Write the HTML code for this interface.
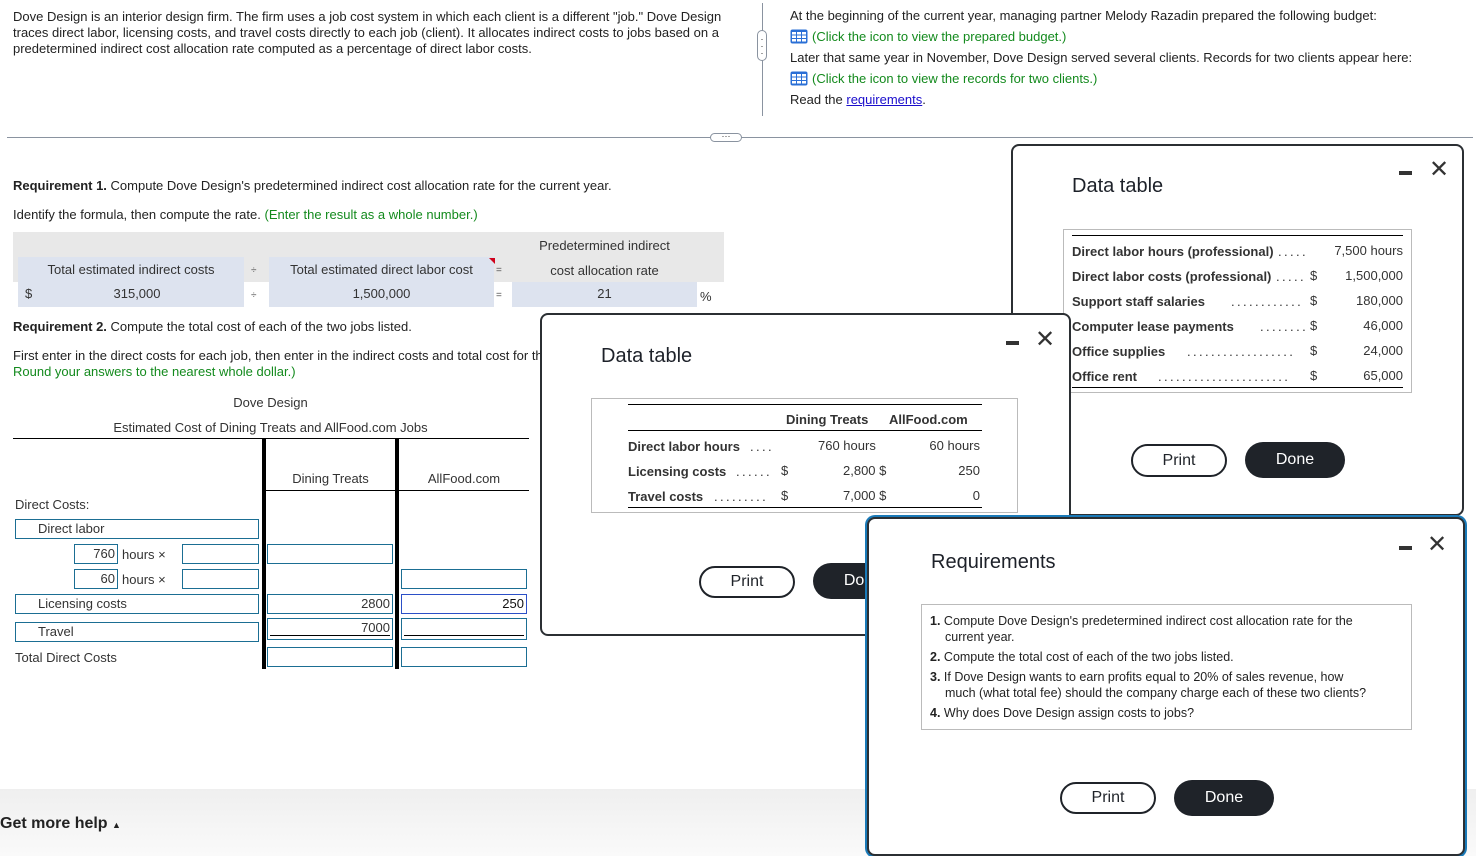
<!DOCTYPE html>
<html><head><meta charset="utf-8"><style>
*{margin:0;padding:0;box-sizing:border-box}
body{width:1476px;height:856px;position:relative;overflow:hidden;background:#fff;font-family:"Liberation Sans",Arial,sans-serif;font-size:13px;color:#222}
.a{position:absolute;white-space:nowrap;line-height:16px}
.g{color:#138a1d}
.box{position:absolute;border:1px solid #1b6e93;background:#fff;text-align:right;padding-right:2px;line-height:17px;font-size:13px}
.bl{position:absolute;background:#dde3ef}
.dlg{position:absolute;background:#fff;border:2px solid #2b2f33;border-radius:8px}
.ttl{position:absolute;font-size:20px;color:#1d2129;line-height:24px}
.min{position:absolute;width:13px;height:4px;background:#333}
.x{position:absolute;font-size:24px;line-height:24px;color:#333;font-weight:300}
.pr{position:absolute;border:2px solid #1f2329;border-radius:17px;text-align:center;font-size:16px;color:#1f2329;background:#fff}
.dn{position:absolute;border-radius:18px;text-align:center;font-size:16px;color:#fff;background:#1f2329}
.tb{position:absolute;border:1px solid #bbb;background:#fff}
.b{font-weight:bold;color:#333}
.d{letter-spacing:2.4px;font-weight:normal;color:#333}
.ic{display:inline-block;width:18px;height:15px;vertical-align:-3px;margin-right:4px}
</style></head><body>

<div class="a" style="left:13px;top:9px;width:720px;white-space:normal">Dove Design is an interior design firm. The firm uses a job cost system in which each client is a different "job." Dove Design traces direct labor, licensing costs, and travel costs directly to each job (client). It allocates indirect costs to jobs based on a predetermined indirect cost allocation rate computed as a percentage of direct labor costs.</div>

<div style="position:absolute;left:762px;top:3px;width:1px;height:113px;background:#8a93a0"></div>
<div style="position:absolute;left:757px;top:30px;width:10px;height:31px;border:1px solid #8a93a0;border-radius:5px;background:#fff;font-size:9px;line-height:7px;text-align:center;padding-top:5px">·<br>·<br>·</div>

<div class="a" style="left:790px;top:8px">At the beginning of the current year, managing partner Melody Razadin prepared the following budget:</div>
<div class="a g" style="left:790px;top:29px"><svg class="ic" viewBox="0 0 18 15"><rect x="0.5" y="0.5" width="17" height="14" rx="2" fill="#2a6fd6"/><g fill="#fff"><rect x="2" y="3" width="4" height="2.5"/><rect x="7" y="3" width="4" height="2.5"/><rect x="12" y="3" width="4" height="2.5"/><rect x="2" y="6.5" width="4" height="2.5"/><rect x="7" y="6.5" width="4" height="2.5"/><rect x="12" y="6.5" width="4" height="2.5"/><rect x="2" y="10" width="4" height="2.5"/><rect x="7" y="10" width="4" height="2.5"/><rect x="12" y="10" width="4" height="2.5"/></g></svg>(Click the icon to view the prepared budget.)</div>
<div class="a" style="left:790px;top:50px">Later that same year in November, Dove Design served several clients. Records for two clients appear here:</div>
<div class="a g" style="left:790px;top:71px"><svg class="ic" viewBox="0 0 18 15"><rect x="0.5" y="0.5" width="17" height="14" rx="2" fill="#2a6fd6"/><g fill="#fff"><rect x="2" y="3" width="4" height="2.5"/><rect x="7" y="3" width="4" height="2.5"/><rect x="12" y="3" width="4" height="2.5"/><rect x="2" y="6.5" width="4" height="2.5"/><rect x="7" y="6.5" width="4" height="2.5"/><rect x="12" y="6.5" width="4" height="2.5"/><rect x="2" y="10" width="4" height="2.5"/><rect x="7" y="10" width="4" height="2.5"/><rect x="12" y="10" width="4" height="2.5"/></g></svg>(Click the icon to view the records for two clients.)</div>
<div class="a" style="left:790px;top:92px">Read the <span style="color:#1a0dcc;text-decoration:underline">requirements</span>.</div>

<div style="position:absolute;left:7px;top:137px;width:1466px;height:1px;background:#8a93a0"></div>
<div style="position:absolute;left:710px;top:133px;width:32px;height:9px;border:1px solid #8a93a0;border-radius:5px;background:#fff;font-size:9px;line-height:4px;text-align:center;color:#333">···</div>

<div class="a" style="left:13px;top:178px"><b>Requirement 1.</b> Compute Dove Design's predetermined indirect cost allocation rate for the current year.</div>
<div class="a" style="left:13px;top:207px">Identify the formula, then compute the rate. <span class="g">(Enter the result as a whole number.)</span></div>

<div style="position:absolute;left:13px;top:232px;width:711px;height:50px;background:#e8e8e8"></div>
<div class="bl" style="left:18px;top:257px;width:226px;height:50px"></div>
<div class="bl" style="left:269px;top:257px;width:225px;height:50px"></div>
<div class="bl" style="left:512px;top:282px;width:185px;height:25px"></div>
<div style="position:absolute;left:489px;top:258px;width:0;height:0;border-left:6px solid transparent;border-top:6px solid #d0021b"></div>
<div class="a" style="left:18px;top:262px;width:226px;text-align:center;color:#333">Total estimated indirect costs</div>
<div class="a" style="left:269px;top:262px;width:225px;text-align:center;color:#333">Total estimated direct labor cost</div>
<div class="a" style="left:512px;top:238px;width:185px;text-align:center;color:#333">Predetermined indirect</div>
<div class="a" style="left:512px;top:263px;width:185px;text-align:center;color:#333">cost allocation rate</div>
<div class="a" style="left:251px;top:263px;font-size:10px;color:#555">÷</div>
<div class="a" style="left:251px;top:288px;font-size:10px;color:#555">÷</div>
<div class="a" style="left:496px;top:263px;font-size:10px;color:#555">=</div>
<div class="a" style="left:496px;top:288px;font-size:10px;color:#555">=</div>
<div class="a" style="left:25px;top:286px;color:#333">$</div>
<div class="a" style="left:30px;top:286px;width:214px;text-align:center;color:#333">315,000</div>
<div class="a" style="left:269px;top:286px;width:225px;text-align:center;color:#333">1,500,000</div>
<div class="a" style="left:512px;top:286px;width:185px;text-align:center;color:#333">21</div>
<div class="a" style="left:700px;top:289px;color:#333">%</div>

<div class="a" style="left:13px;top:319px"><b>Requirement 2.</b> Compute the total cost of each of the two jobs listed.</div>
<div class="a" style="left:13px;top:348px">First enter in the direct costs for each job, then enter in the indirect costs and total cost for the jobs. (Enter the direct labor rate as a whole number.</div>
<div class="a g" style="left:13px;top:364px">Round your answers to the nearest whole dollar.)</div>

<div class="a" style="left:13px;top:395px;width:515px;text-align:center;color:#333">Dove Design</div>
<div class="a" style="left:13px;top:420px;width:515px;text-align:center;color:#333">Estimated Cost of Dining Treats and AllFood.com Jobs</div>
<div style="position:absolute;left:13px;top:438px;width:516px;height:1px;background:#000"></div>
<div style="position:absolute;left:262px;top:439px;width:4px;height:230px;background:#000"></div>
<div style="position:absolute;left:395px;top:439px;width:4px;height:230px;background:#000"></div>
<div style="position:absolute;left:266px;top:490px;width:129px;height:1px;background:#000"></div>
<div style="position:absolute;left:399px;top:490px;width:130px;height:1px;background:#000"></div>
<div class="a" style="left:266px;top:471px;width:129px;text-align:center;color:#333">Dining Treats</div>
<div class="a" style="left:399px;top:471px;width:130px;text-align:center;color:#333">AllFood.com</div>
<div class="a" style="left:15px;top:497px;color:#333">Direct Costs:</div>

<div class="box" style="left:15px;top:519px;width:244px;height:20px;text-align:left;padding-left:22px;color:#333">Direct labor</div>
<div class="box" style="left:74px;top:544px;width:44px;height:20px;color:#333">760</div>
<div class="a" style="left:122px;top:547px;color:#333">hours ×</div>
<div class="box" style="left:182px;top:544px;width:77px;height:20px"></div>
<div class="box" style="left:267px;top:544px;width:126px;height:20px"></div>
<div class="box" style="left:74px;top:569px;width:44px;height:20px;color:#333">60</div>
<div class="a" style="left:122px;top:572px;color:#333">hours ×</div>
<div class="box" style="left:182px;top:569px;width:77px;height:20px"></div>
<div class="box" style="left:401px;top:569px;width:126px;height:20px"></div>
<div class="box" style="left:15px;top:594px;width:244px;height:20px;text-align:left;padding-left:22px;color:#333">Licensing costs</div>
<div class="box" style="left:267px;top:594px;width:126px;height:20px;color:#333">2800</div>
<div class="box" style="left:401px;top:594px;width:126px;height:20px;border-color:#2b4fc7;color:#111">250</div>
<div class="box" style="left:15px;top:622px;width:244px;height:20px;text-align:left;padding-left:22px;color:#333">Travel</div>
<div class="box" style="left:267px;top:618px;width:126px;height:22px;color:#333">7000<div style="position:absolute;left:2px;right:2px;bottom:3px;height:1px;background:#000"></div></div>
<div class="box" style="left:401px;top:618px;width:126px;height:22px"><div style="position:absolute;left:2px;right:2px;bottom:3px;height:1px;background:#000"></div></div>
<div class="a" style="left:15px;top:650px;color:#333">Total Direct Costs</div>
<div class="box" style="left:267px;top:647px;width:126px;height:20px"></div>
<div class="box" style="left:401px;top:647px;width:126px;height:20px"></div>

<div style="position:absolute;left:0;top:789px;width:1476px;height:67px;background:linear-gradient(#efefef,#fafafa)"></div>
<div class="a" style="left:0;top:815px;font-size:16px;line-height:18px;font-weight:bold;color:#222">Get more help <span style="font-size:9px">▲</span></div>

<!-- Dialog 1 -->
<div class="dlg" style="left:1011px;top:144px;width:453px;height:372px">
<div class="ttl" style="left:59px;top:28px">Data table</div>
<div class="min" style="left:386px;top:25px"></div>
<div class="x" style="left:416px;top:12px">✕</div>
<div class="tb" style="left:50px;top:83px;width:349px;height:164px">
<div style="position:absolute;left:8px;right:8px;top:5px;height:1px;background:#000"></div>
<div style="position:absolute;left:8px;right:8px;top:157px;height:1px;background:#000"></div>
<div class="a b" style="left:8px;top:14px">Direct labor hours (professional)</div><div class="a d" style="left:214px;top:14px">.....</div>
<div class="a" style="right:8px;top:13px;color:#333">7,500 hours</div>
<div class="a b" style="left:8px;top:39px">Direct labor costs (professional)</div><div class="a d" style="left:212px;top:39px">.....</div><div class="a" style="left:246px;top:38px;color:#333">$</div>
<div class="a" style="right:8px;top:38px;color:#333">1,500,000</div>
<div class="a b" style="left:8px;top:64px">Support staff salaries</div><div class="a d" style="left:167px;top:64px">............</div><div class="a" style="left:246px;top:63px;color:#333">$</div>
<div class="a" style="right:8px;top:63px;color:#333">180,000</div>
<div class="a b" style="left:8px;top:89px">Computer lease payments</div><div class="a d" style="left:196px;top:89px">........</div><div class="a" style="left:246px;top:88px;color:#333">$</div>
<div class="a" style="right:8px;top:88px;color:#333">46,000</div>
<div class="a b" style="left:8px;top:114px">Office supplies</div><div class="a d" style="left:123px;top:114px">..................</div><div class="a" style="left:246px;top:113px;color:#333">$</div>
<div class="a" style="right:8px;top:113px;color:#333">24,000</div>
<div class="a b" style="left:8px;top:139px">Office rent</div><div class="a d" style="left:94px;top:139px">......................</div><div class="a" style="left:246px;top:138px;color:#333">$</div>
<div class="a" style="right:8px;top:138px;color:#333">65,000</div>
</div>
<div class="pr" style="left:118px;top:298px;width:96px;height:33px;line-height:29px">Print</div>
<div class="dn" style="left:232px;top:296px;width:100px;height:36px;line-height:36px">Done</div>
</div>

<!-- Dialog 2 -->
<div class="dlg" style="left:540px;top:313px;width:531px;height:323px">
<div class="ttl" style="left:59px;top:29px">Data table</div>
<div class="min" style="left:464px;top:26px"></div>
<div class="x" style="left:493px;top:13px">✕</div>
<div class="tb" style="left:49px;top:83px;width:427px;height:115px">
<div style="position:absolute;left:36px;width:354px;top:5px;height:1px;background:#000"></div>
<div style="position:absolute;left:36px;width:354px;top:31px;height:1px;background:#000"></div>
<div style="position:absolute;left:36px;width:354px;top:108px;height:1px;background:#000"></div>
<div class="a b" style="left:194px;top:13px">Dining Treats</div>
<div class="a b" style="left:297px;top:13px">AllFood.com</div>
<div class="a b" style="left:36px;top:40px">Direct labor hours</div><div class="a d" style="left:158px;top:40px">....</div>
<div class="a" style="left:226px;top:39px;color:#333">760 hours</div>
<div class="a" style="right:37px;top:39px;color:#333">60 hours</div>
<div class="a b" style="left:36px;top:65px">Licensing costs</div><div class="a d" style="left:144px;top:65px">......</div><div class="a" style="left:189px;top:64px;color:#333">$</div>
<div class="a" style="left:251px;top:64px;color:#333">2,800 $</div>
<div class="a" style="right:37px;top:64px;color:#333">250</div>
<div class="a b" style="left:36px;top:90px">Travel costs</div><div class="a d" style="left:122px;top:90px">.........</div><div class="a" style="left:189px;top:89px;color:#333">$</div>
<div class="a" style="left:251px;top:89px;color:#333">7,000 $</div>
<div class="a" style="right:37px;top:89px;color:#333">0</div>
</div>
<div class="pr" style="left:157px;top:251px;width:96px;height:32px;line-height:28px">Print</div>
<div class="dn" style="left:271px;top:248px;width:100px;height:36px;line-height:36px">Done</div>
</div>

<!-- Requirements -->
<div class="dlg" style="left:867px;top:517px;width:598px;height:339px;box-shadow:0 0 0 2px #1a7ab8">
<div class="ttl" style="left:62px;top:31px">Requirements</div>
<div class="min" style="left:530px;top:27px"></div>
<div class="x" style="left:558px;top:14px">✕</div>
<div class="tb" style="left:52px;top:85px;width:491px;height:126px;font-size:12.5px;color:#222">
<div class="a" style="left:8px;top:8px;white-space:normal;width:450px;line-height:16px;padding-left:15px;text-indent:-15px"><b>1.</b> Compute Dove Design's predetermined indirect cost allocation rate for the current year.</div>
<div class="a" style="left:8px;top:44px"><b>2.</b> Compute the total cost of each of the two jobs listed.</div>
<div class="a" style="left:8px;top:64px;white-space:normal;width:455px;line-height:16px;padding-left:15px;text-indent:-15px"><b>3.</b> If Dove Design wants to earn profits equal to 20% of sales revenue, how<br>much (what total fee) should the company charge each of these two clients?</div>
<div class="a" style="left:8px;top:100px"><b>4.</b> Why does Dove Design assign costs to jobs?</div>
</div>
<div class="pr" style="left:191px;top:263px;width:96px;height:32px;line-height:28px">Print</div>
<div class="dn" style="left:305px;top:261px;width:100px;height:36px;line-height:36px">Done</div>
</div>

</body></html>
